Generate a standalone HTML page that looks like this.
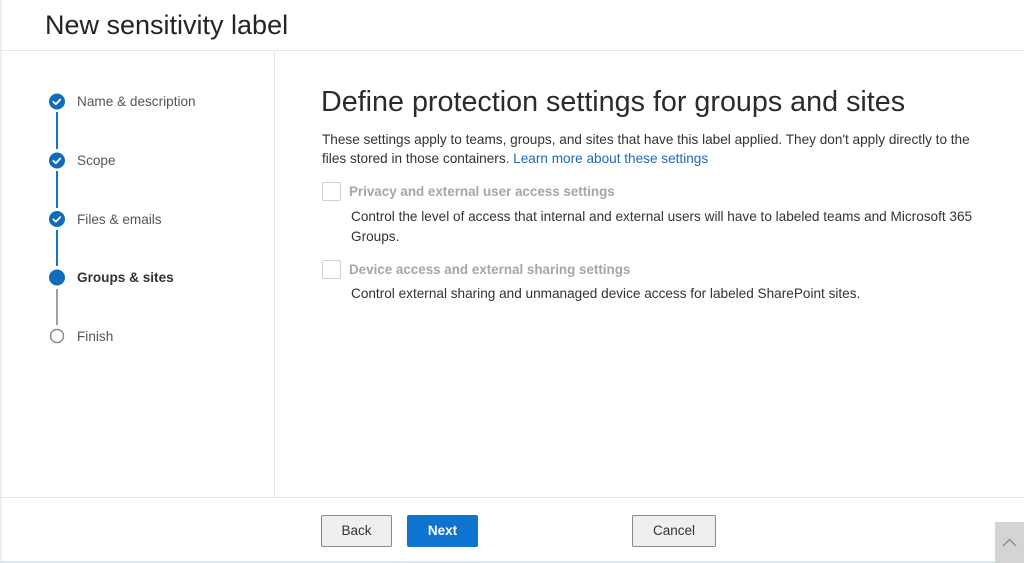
<!DOCTYPE html>
<html><head><style>
body{margin:0;width:1024px;height:563px;background:#fff;font-family:"Liberation Sans",sans-serif;position:relative;overflow:hidden;color:#323130}
.abs{position:absolute}
.t{white-space:nowrap;transform-origin:left top}
</style></head><body>
<div class="abs" style="left:0;top:0;width:2px;height:563px;background:#eee"></div>
<div class="abs t" style="left:45px;top:10px;font-size:27px;color:#252423">New sensitivity label</div>
<div class="abs" style="left:0;top:50px;width:1024px;height:1px;background:#e6e6e6"></div>
<div class="abs" style="left:274px;top:51px;width:1px;height:446px;background:#e6e6e6"></div>
<div class="abs" style="left:0;top:497px;width:1024px;height:1px;background:#e6e6e6"></div>

<div class="abs" style="left:56px;top:112px;width:2px;height:37px;background:#1a73c2"></div>
<div class="abs" style="left:56px;top:171px;width:2px;height:37px;background:#1a73c2"></div>
<div class="abs" style="left:56px;top:230px;width:2px;height:36px;background:#1a73c2"></div>
<div class="abs" style="left:56px;top:289px;width:2px;height:36px;background:#a0a0a0"></div>
<svg class="abs" style="left:0;top:0" width="80" height="360">
<g fill="#0f6cbd">
<circle cx="57" cy="101.5" r="8"/><circle cx="57" cy="160.5" r="8"/><circle cx="57" cy="219" r="8"/><circle cx="57" cy="277.5" r="8"/>
</g>
<g stroke="#fff" stroke-width="1.8" fill="none" stroke-linecap="round" stroke-linejoin="round">
<path d="M53.3 101.8l2.5 2.4 4.4-4.6"/><path d="M53.3 160.8l2.5 2.4 4.4-4.6"/><path d="M53.3 219.3l2.5 2.4 4.4-4.6"/>
</g>
<circle cx="57" cy="336" r="6.5" fill="none" stroke="#8a8a8a" stroke-width="1.5"/>
</svg>
<div class="abs t" style="left:77px;top:94px;font-size:13.6px;color:#555">Name &amp; description</div>
<div class="abs t" style="left:77px;top:153px;font-size:13.6px;color:#555">Scope</div>
<div class="abs t" style="left:77px;top:212px;font-size:13.6px;color:#555">Files &amp; emails</div>
<div class="abs t" style="left:77px;top:270px;font-size:13.6px;font-weight:bold;color:#333">Groups &amp; sites</div>
<div class="abs t" style="left:77px;top:329px;font-size:13.6px;color:#555">Finish</div>

<div class="abs t" style="left:321px;top:86px;font-size:29px;color:#2b2b2b;transform:scaleX(0.99)">Define protection settings for groups and sites</div>
<div class="abs t" style="left:322px;top:130px;font-size:13.6px;line-height:19px;color:#333">These settings apply to teams, groups, and sites that have this label applied. They don't apply directly to the<br>files stored in those containers. <span style="color:#1e6bb8">Learn more about these settings</span></div>

<div class="abs" style="left:322px;top:182px;width:17px;height:17px;border:1px solid #d0d0d0;border-radius:2px"></div>
<div class="abs t" style="left:349px;top:184px;font-size:13.4px;font-weight:bold;color:#a6a6a6">Privacy and external user access settings</div>
<div class="abs t" style="left:351px;top:207px;font-size:13.6px;line-height:20px;color:#333">Control the level of access that internal and external users will have to labeled teams and Microsoft 365<br>Groups.</div>

<div class="abs" style="left:322px;top:260px;width:17px;height:17px;border:1px solid #d0d0d0;border-radius:2px"></div>
<div class="abs t" style="left:349px;top:262px;font-size:13.4px;font-weight:bold;color:#a6a6a6">Device access and external sharing settings</div>
<div class="abs t" style="left:351px;top:286px;font-size:13.6px;color:#333">Control external sharing and unmanaged device access for labeled SharePoint sites.</div>

<div class="abs" style="left:321px;top:515px;width:69px;height:30px;border:1px solid #8a8a8a;border-radius:2px;background:#efefef;font-size:13.5px;line-height:30px;text-align:center;color:#333">Back</div>
<div class="abs" style="left:407px;top:515px;width:71px;height:32px;border-radius:2px;background:#0f73d0;font-size:13.5px;font-weight:bold;line-height:32px;text-align:center;color:#fff">Next</div>
<div class="abs" style="left:632px;top:515px;width:82px;height:30px;border:1px solid #8a8a8a;border-radius:2px;background:#efefef;font-size:13.5px;line-height:30px;text-align:center;color:#333">Cancel</div>

<div class="abs" style="left:995px;top:522px;width:29px;height:41px;background:#d4d4d4"></div>
<svg class="abs" style="left:995px;top:522px" width="29" height="41"><path d="M8 24l6.5-6.5 6.5 6.5" stroke="#888" stroke-width="1.3" fill="none"/></svg>
<div class="abs" style="left:0;top:561px;width:995px;height:2px;background:#dde8ec"></div>
</body></html>
